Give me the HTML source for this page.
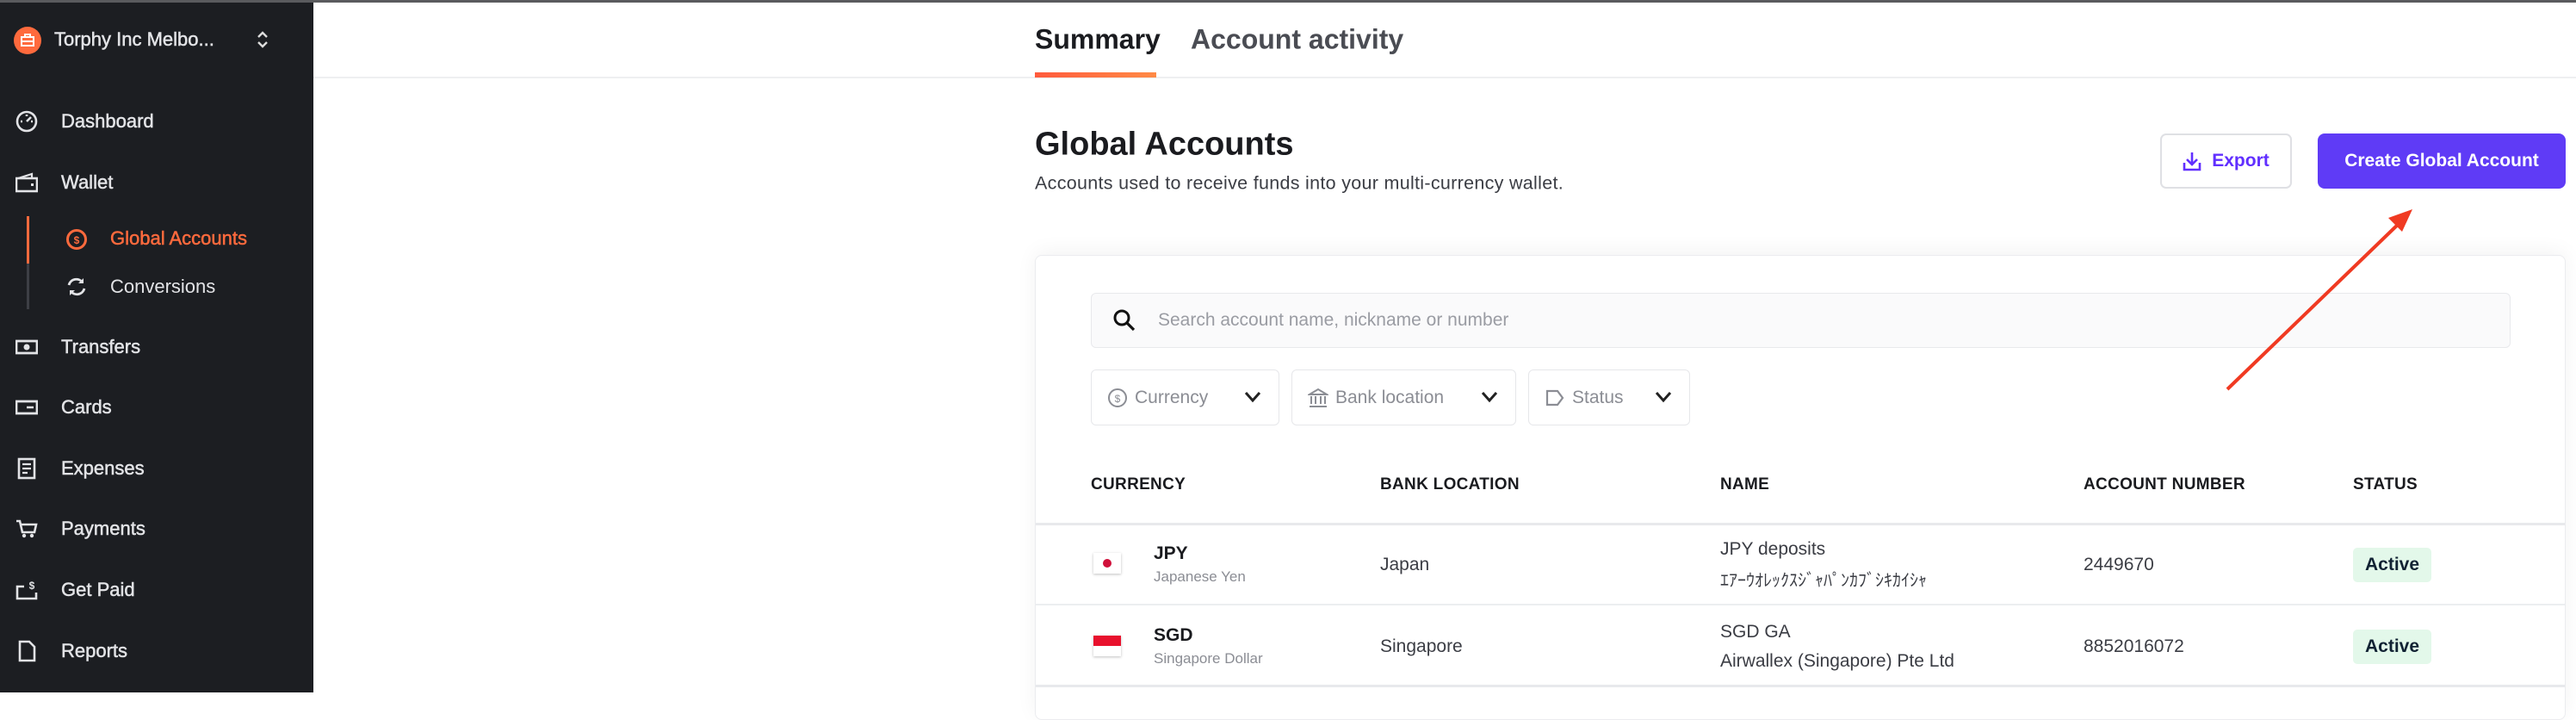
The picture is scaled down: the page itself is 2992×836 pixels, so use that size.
<!DOCTYPE html>
<html><head><meta charset="utf-8"><style>
*{margin:0;padding:0;box-sizing:border-box}
body{width:2992px;height:804px;overflow:hidden;background:#fff;font-family:"Liberation Sans","Noto Sans CJK JP",sans-serif;position:relative;color:#1a1b1f}
.top{position:absolute;left:0;top:0;width:2992px;height:3px;background:#5a5b5e}
.side{position:absolute;left:0;top:3px;width:364px;height:801px;background:#1c1e22}
.a{position:absolute}
.nav{position:absolute;left:71px;color:#e2e3e6;font-size:22px;font-weight:normal;transform:translateY(-50%);-webkit-text-stroke:0.5px #e2e3e6}
.ic{position:absolute;left:18px;width:26px;height:26px;transform:translateY(-50%)}
.t{position:absolute;transform:translateY(-50%);white-space:nowrap}
.th{font-size:19px;font-weight:bold;color:#1a1b1f;letter-spacing:.3px}
.td{font-size:21px;color:#3b3d44}
.badge{position:absolute;left:2733px;width:91px;height:40px;background:#e3f8ea;border-radius:5px;font-size:21px;font-weight:bold;color:#123;display:flex;align-items:center;justify-content:center}
.flt{position:absolute;top:429px;height:65px;border:1.5px solid #e6e7ea;border-radius:6px;color:#8b8d94;font-size:21px;display:flex;align-items:center;padding-left:50px}
</style></head><body>
<div class="top"></div>
<div class="side">
 <div class="a" style="left:16px;top:28px;width:32px;height:32px;border-radius:50%;background:#ff6a3d"></div>
 <svg class="a" style="left:23px;top:35px" width="18" height="18" viewBox="0 0 18 18"><rect x="2" y="5" width="14" height="10" fill="none" stroke="#fff" stroke-width="2"/><rect x="6" y="2" width="6" height="3" fill="none" stroke="#fff" stroke-width="2"/><line x1="2" y1="10" x2="16" y2="10" stroke="#fff" stroke-width="2"/></svg>
 <div class="nav" style="left:63px;top:43px;font-size:22px">Torphy Inc Melbo...</div>
 <svg class="a" style="left:298px;top:32px" width="14" height="22" viewBox="0 0 14 22"><path d="M2 8l5-5 5 5M2 14l5 5 5-5" fill="none" stroke="#ddd" stroke-width="2.4"/></svg>

 <svg class="ic" style="top:138px" viewBox="0 0 26 26"><circle cx="13" cy="13" r="11" fill="none" stroke="#e2e3e6" stroke-width="2.6"/><path d="M13 13l5-5M6 13h2M18 13h2M13 5v2" stroke="#e2e3e6" stroke-width="2.6"/></svg>
 <div class="nav" style="top:138px">Dashboard</div>
 <svg class="ic" style="top:209px" viewBox="0 0 26 26"><rect x="1" y="8" width="24" height="15" fill="none" stroke="#e2e3e6" stroke-width="2.6"/><path d="M3 8l16-5v5" fill="none" stroke="#e2e3e6" stroke-width="2.2"/><rect x="18" y="14" width="3" height="3" fill="#e2e3e6"/></svg>
 <div class="nav" style="top:209px">Wallet</div>
 <div class="a" style="left:31px;top:248px;width:3px;height:55px;background:#ff6a3d"></div>
 <div class="a" style="left:31px;top:303px;width:3px;height:53px;background:#3d3f45"></div>
 <svg class="a" style="left:76px;top:262px" width="26" height="26" viewBox="0 0 26 26"><circle cx="13" cy="13" r="10.5" fill="none" stroke="#ff6a3d" stroke-width="3"/><text x="13" y="18" font-size="12" font-weight="bold" fill="#ff6a3d" text-anchor="middle" font-family="Liberation Sans">$</text></svg>
 <div class="nav" style="left:128px;top:274px;color:#ff6a3d;-webkit-text-stroke:0.5px #ff6a3d">Global Accounts</div>
 <svg class="a" style="left:76px;top:317px" width="26" height="26" viewBox="0 0 26 26"><path d="M4 11a9 9 0 0 1 16-3M22 15a9 9 0 0 1-16 3" fill="none" stroke="#e2e3e6" stroke-width="2.8"/><path d="M21 3v6h-6M5 23v-6h6" fill="#e2e3e6"/></svg>
 <div class="nav" style="left:128px;top:330px;-webkit-text-stroke:0">Conversions</div>
 <svg class="ic" style="top:400px" viewBox="0 0 26 26"><rect x="1" y="6" width="24" height="14" fill="none" stroke="#e2e3e6" stroke-width="2.8"/><circle cx="13" cy="13" r="3.5" fill="#e2e3e6"/></svg>
 <div class="nav" style="top:400px">Transfers</div>
 <svg class="ic" style="top:470px" viewBox="0 0 26 26"><rect x="1" y="6" width="24" height="14" fill="none" stroke="#e2e3e6" stroke-width="2.8"/><line x1="13" y1="13" x2="21" y2="13" stroke="#e2e3e6" stroke-width="2.5"/></svg>
 <div class="nav" style="top:470px">Cards</div>
 <svg class="ic" style="top:541px" viewBox="0 0 26 26"><rect x="4" y="2" width="18" height="22" fill="none" stroke="#e2e3e6" stroke-width="2.6"/><path d="M8 8h10M8 13h10M8 18h6" stroke="#e2e3e6" stroke-width="2.2"/></svg>
 <div class="nav" style="top:541px">Expenses</div>
 <svg class="ic" style="top:611px" viewBox="0 0 26 26"><path d="M1 4h4l3 13h14l2-9H7" fill="none" stroke="#e2e3e6" stroke-width="2.6"/><circle cx="10" cy="21" r="2.2" fill="#e2e3e6"/><circle cx="19" cy="21" r="2.2" fill="#e2e3e6"/></svg>
 <div class="nav" style="top:611px">Payments</div>
 <svg class="ic" style="top:682px" viewBox="0 0 26 26"><path d="M10 9H2v14h22v-7" fill="none" stroke="#e2e3e6" stroke-width="2.6"/><text x="19" y="12" font-size="12" font-weight="bold" fill="#e2e3e6" text-anchor="middle" font-family="Liberation Sans">$</text></svg>
 <div class="nav" style="top:682px">Get Paid</div>
 <svg class="ic" style="top:753px" viewBox="0 0 26 26"><path d="M5 2h11l6 6v16H5z" fill="none" stroke="#e2e3e6" stroke-width="2.6"/></svg>
 <div class="nav" style="top:753px">Reports</div>
</div>

<div class="t" style="left:1202px;top:46px;font-size:32px;font-weight:bold">Summary</div>
<div class="t" style="left:1383px;top:46px;font-size:32px;font-weight:bold;color:#4a4c53">Account activity</div>
<div class="a" style="left:364px;top:89px;width:2628px;height:2px;background:#eeeff1"></div>
<div class="a" style="left:1202px;top:84px;width:141px;height:6px;background:linear-gradient(90deg,#ff5a3c,#ff8a45)"></div>

<div class="t" style="left:1202px;top:168px;font-size:38px;font-weight:bold">Global Accounts</div>
<div class="t" style="left:1202px;top:213px;font-size:21.5px;color:#3b3d44;letter-spacing:0.3px">Accounts used to receive funds into your multi-currency wallet.</div>

<div class="a" style="left:2509px;top:155px;width:153px;height:64px;border:2px solid #dfe0e4;border-radius:7px;color:#612fff;font-size:21px;font-weight:bold;display:flex;align-items:center;justify-content:center;gap:12px">
 <svg width="22" height="24" viewBox="0 0 22 24"><path d="M11 2v14M5 10l6 6 6-6M2 14v8h18v-8" fill="none" stroke="#612fff" stroke-width="2.6"/></svg>Export</div>
<div class="a" style="left:2692px;top:155px;width:288px;height:64px;background:#5f3bf6;border-radius:8px;color:#fff;font-size:21px;font-weight:bold;display:flex;align-items:center;justify-content:center">Create Global Account</div>

<div class="a" style="left:1202px;top:296px;width:1778px;height:540px;border:1.5px solid #ebecef;border-radius:8px;box-shadow:0 -4px 24px rgba(0,0,0,.05);background:#fff"></div>

<div class="a" style="left:1267px;top:340px;width:1649px;height:64px;background:#fafafb;border:1.5px solid #e8e9ec;border-radius:6px"></div>
<svg class="a" style="left:1292px;top:358px" width="28" height="28" viewBox="0 0 28 28"><circle cx="11" cy="11" r="8" fill="none" stroke="#111" stroke-width="3"/><path d="M17 17l8 8" stroke="#111" stroke-width="3.2"/></svg>
<div class="t" style="left:1345px;top:372px;font-size:21px;color:#9a9ca3">Search account name, nickname or number</div>

<div class="flt" style="left:1267px;width:219px">Currency<svg class="a" style="left:18px;top:20px" width="24" height="24" viewBox="0 0 24 24"><circle cx="12" cy="12" r="10" fill="none" stroke="#8b8d94" stroke-width="2"/><text x="12" y="17" font-size="12" fill="#8b8d94" text-anchor="middle" font-family="Liberation Sans">$</text></svg><svg class="a" style="right:20px;top:23px" width="20" height="16" viewBox="0 0 20 16"><path d="M2 3l8 9 8-9" fill="none" stroke="#222" stroke-width="3"/></svg></div>
<div class="flt" style="left:1500px;width:261px">Bank location<svg class="a" style="left:18px;top:20px" width="24" height="24" viewBox="0 0 24 24"><path d="M2 8l10-6 10 6zM4 10v9M9 10v9M15 10v9M20 10v9M2 22h20" fill="none" stroke="#8b8d94" stroke-width="2"/></svg><svg class="a" style="right:20px;top:23px" width="20" height="16" viewBox="0 0 20 16"><path d="M2 3l8 9 8-9" fill="none" stroke="#222" stroke-width="3"/></svg></div>
<div class="flt" style="left:1775px;width:188px">Status<svg class="a" style="left:18px;top:20px" width="24" height="24" viewBox="0 0 24 24"><path d="M3 4h12l6 8-6 8H3z" fill="none" stroke="#8b8d94" stroke-width="2.2"/></svg><svg class="a" style="right:20px;top:23px" width="20" height="16" viewBox="0 0 20 16"><path d="M2 3l8 9 8-9" fill="none" stroke="#222" stroke-width="3"/></svg></div>

<div class="t th" style="left:1267px;top:563px">CURRENCY</div>
<div class="t th" style="left:1603px;top:563px">BANK LOCATION</div>
<div class="t th" style="left:1998px;top:563px">NAME</div>
<div class="t th" style="left:2420px;top:563px">ACCOUNT NUMBER</div>
<div class="t th" style="left:2733px;top:563px">STATUS</div>
<div class="a" style="left:1203px;top:607px;width:1776px;height:3px;background:#e8e9ec"></div>

<div class="a" style="left:1270px;top:642px;width:32px;height:24px;background:#fff;box-shadow:0 1px 3px rgba(0,0,0,.25)"><div style="position:absolute;left:11px;top:7px;width:10px;height:10px;border-radius:50%;background:#d0103a"></div></div>
<div class="t" style="left:1340px;top:643px;font-size:21px;font-weight:bold">JPY</div>
<div class="t" style="left:1340px;top:670px;font-size:17px;color:#8b8d94">Japanese Yen</div>
<div class="t td" style="left:1603px;top:656px">Japan</div>
<div class="t td" style="left:1998px;top:638px">JPY deposits</div>
<div class="t" style="left:1998px;top:672px;font-size:20px;color:#3b3d44">ｴｱｰｳｵﾚｯｸｽｼﾞｬﾊﾟﾝｶﾌﾞｼｷｶｲｼｬ</div>
<div class="t td" style="left:2420px;top:656px">2449670</div>
<div class="badge" style="top:636px">Active</div>
<div class="a" style="left:1203px;top:701px;width:1776px;height:2px;background:#eceef0"></div>

<div class="a" style="left:1270px;top:738px;width:32px;height:24px;background:#fff;box-shadow:0 1px 3px rgba(0,0,0,.25)"><div style="height:12px;background:#e8112d"></div></div>
<div class="t" style="left:1340px;top:738px;font-size:21px;font-weight:bold">SGD</div>
<div class="t" style="left:1340px;top:765px;font-size:17px;color:#8b8d94">Singapore Dollar</div>
<div class="t td" style="left:1603px;top:751px">Singapore</div>
<div class="t td" style="left:1998px;top:734px">SGD GA</div>
<div class="t td" style="left:1998px;top:768px">Airwallex (Singapore) Pte Ltd</div>
<div class="t td" style="left:2420px;top:751px">8852016072</div>
<div class="badge" style="top:731px">Active</div>
<div class="a" style="left:1203px;top:795px;width:1776px;height:3px;background:#e8e9ec"></div>

<svg class="a" style="left:0;top:0" width="2992" height="804"><line x1="2587" y1="452" x2="2790" y2="256" stroke="#f03a22" stroke-width="4"/><path d="M2802 243l-28 10 16 16z" fill="#f03a22"/></svg>
</body></html>
